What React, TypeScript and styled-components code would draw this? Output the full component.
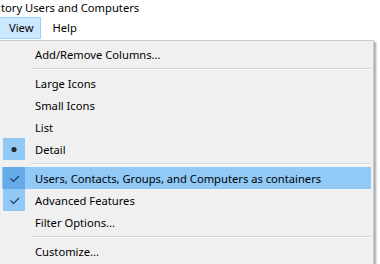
import styled, { createGlobalStyle } from "styled-components";

const GlobalStyle = createGlobalStyle`
  html, body {
    margin: 0;
    padding: 0;
    background: #ffffff;
    overflow: hidden;
  }
  body {
    font-family: "Noto Sans", "Open Sans", sans-serif;
    font-size: 11.2px;
    color: #000000;
  }
`;

type Mark = "check" | "dot" | undefined;

type Entry =
  | { kind: "item"; label: string; mark?: Mark; active?: boolean }
  | { kind: "sep" };

const entries: Entry[] = [
  { kind: "item", label: "Add/Remove Columns..." },
  { kind: "sep" },
  { kind: "item", label: "Large Icons" },
  { kind: "item", label: "Small Icons" },
  { kind: "item", label: "List" },
  { kind: "item", label: "Detail", mark: "dot" },
  { kind: "sep" },
  {
    kind: "item",
    label: "Users, Contacts, Groups, and Computers as containers",
    mark: "check",
    active: true,
  },
  { kind: "item", label: "Advanced Features", mark: "check" },
  { kind: "item", label: "Filter Options..." },
  { kind: "sep" },
  { kind: "item", label: "Customize..." },
];

const MarkIcon = ({ mark }: { mark: Mark }) => {
  if (mark === "check") {
    return (
      <svg width="22" height="22" viewBox="0 0 22 22">
        <path d="M7.5 11.5 L10.5 14.5 L16 9" fill="none" stroke="#1f3b5c" strokeWidth="1.2" />
      </svg>
    );
  }
  if (mark === "dot") {
    return (
      <svg width="22" height="22" viewBox="0 0 22 22">
        <circle cx="11" cy="11.5" r="2.6" fill="#1f2a36" />
      </svg>
    );
  }
  return null;
};

export default function App() {
  return (
    <>
      <GlobalStyle />
      <Window>
        <Title>tory Users and Computers</Title>
        <MenuBar>
          <MenuTitle $open>View</MenuTitle>
          <MenuTitle>Help</MenuTitle>
        </MenuBar>
        <Dropdown>
          {entries.map((e, i) =>
            e.kind === "sep" ? (
              <Separator key={i} />
            ) : (
              <Item key={i} $active={e.active}>
                <MarkBox $on={!!e.mark} $active={e.active}>
                  <MarkIcon mark={e.mark} />
                </MarkBox>
                <Label>{e.label}</Label>
              </Item>
            )
          )}
        </Dropdown>
      </Window>
    </>
  );
}

const Window = styled.div`
  width: 380px;
  height: 264px;
  overflow: hidden;
`;

const Title = styled.div`
  height: 16px;
  line-height: 15px;
  padding-left: 1px;
`;

const MenuBar = styled.div`
  display: flex;
  align-items: center;
  height: 22px;
  margin-top: 1px;
`;

const MenuTitle = styled.div<{ $open?: boolean }>`
  height: 20px;
  line-height: 20px;
  padding: 0 7px 0 9px;
  margin-right: 1px;
  border: 1px solid ${(p) => (p.$open ? "#99d1ff" : "transparent")};
  background: ${(p) => (p.$open ? "#cce8ff" : "transparent")};
  margin-left: ${(p) => (p.$open ? "-1px" : "0")};
`;

const Dropdown = styled.div`
  width: 369px;
  margin-top: 1px;
  margin-left: -1px;
  padding: 2px;
  background: #f0f0f0;
  border: 1px solid #cccccc;
  box-shadow: 2px 2px 2px rgba(0, 0, 0, 0.35);
`;

const Item = styled.div<{ $active?: boolean }>`
  display: flex;
  align-items: center;
  height: 22px;
  background: ${(p) => (p.$active ? "#91c9f7" : "transparent")};
`;

const MarkBox = styled.div<{ $on: boolean; $active?: boolean }>`
  width: 22px;
  height: 22px;
  margin-left: 1px;
  background: ${(p) => (!p.$on ? "transparent" : p.$active ? "#64abe8" : "#90c8f6")};
`;

const Label = styled.span`
  margin-left: 10px;
  white-space: nowrap;
`;

const Separator = styled.div`
  height: 1px;
  margin: 3px 0 2px 30px;
  background: #d7d7d7;
  border-bottom: 1px solid #ffffff;
`;
